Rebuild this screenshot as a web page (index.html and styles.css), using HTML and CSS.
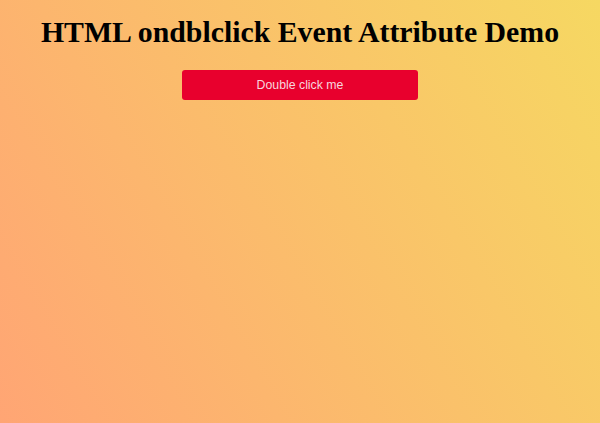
FILE: index.html
```html
<!DOCTYPE html>
<html lang="en">
<head>
<meta charset="utf-8">
<title>HTML ondblclick Event Attribute Demo</title>
<link rel="stylesheet" href="styles.css">
</head>
<body>
<main class="page">
  <h1 class="title">HTML ondblclick Event Attribute Demo</h1>
  <button class="dbl-button" type="button">Double click me</button>
</main>
</body>
</html>
```
FILE: styles.css
```css
html {
  height: 100%;
}
body {
  margin: 0;
  min-height: 100%;
  background: linear-gradient(60deg, #ffa574 0%, #f6d862 100%);
  font-family: "Liberation Serif", "Times New Roman", serif;
}
.page {
  display: flex;
  flex-direction: column;
  align-items: center;
  padding-top: 15px;
}
.title {
  margin: 0;
  font-size: 29.8px;
  font-weight: bold;
  line-height: 34px;
  color: #000;
  text-align: center;
}
.dbl-button {
  margin-top: 21px;
  width: 236px;
  height: 30px;
  border: none;
  border-radius: 3px;
  background: #e8002d;
  color: #f7d6de;
  font-family: "Liberation Sans", Arial, sans-serif;
  font-size: 12.3px;
  cursor: pointer;
}
```
